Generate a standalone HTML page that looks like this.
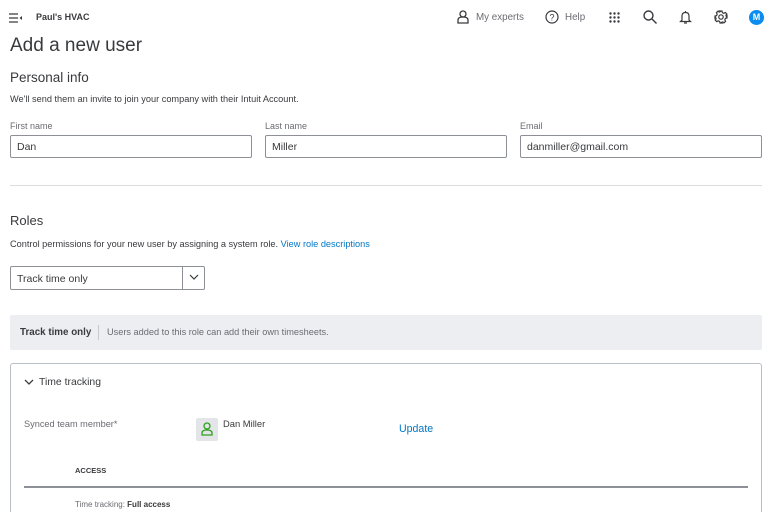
<!DOCTYPE html>
<html style="overflow:hidden;height:512px"><head><style>
*{margin:0;padding:0;box-sizing:border-box}
body{width:768px;height:512px;overflow:hidden;background:#fff;font-family:"Liberation Sans",sans-serif;color:#393a3d;position:relative}
.a{position:absolute;white-space:nowrap}
.inp{position:absolute;height:23px;border:1px solid #8d9096;border-radius:2px;font-size:10.5px;padding:5px 6px;color:#393a3d}
.lbl{font-size:9px;color:#6b6c72}
</style></head><body>
<svg class="a" style="left:9px;top:13px" width="14" height="10"><path d="M0 1h9M0 5h9M0 9h9" stroke="#393a3d" stroke-width="1.3"/><path d="M13 3v4l-2.5-2z" fill="#393a3d"/></svg>
<div class="a" style="left:36px;top:12px;font-size:9px;font-weight:bold">Paul's HVAC</div>
<div class="a" style="left:10px;top:35px;font-size:19px">Add a new user</div>
<div class="a" style="left:10px;top:70px;font-size:13.5px">Personal info</div>
<div class="a" style="left:10px;top:94px;font-size:9.2px">We'll send them an invite to join your company with their Intuit Account.</div>

<svg class="a" style="left:457px;top:10px" width="12" height="14" fill="none" stroke="#393a3d" stroke-width="1.3"><circle cx="6" cy="4" r="3"/><path d="M1 13v-3q0-3 5-3t5 3v3z"/></svg>
<div class="a" style="left:476px;top:12px;font-size:9.8px;color:#6b6c72">My experts</div>
<svg class="a" style="left:545px;top:10px" width="14" height="14" fill="none" stroke="#393a3d" stroke-width="1.2"><circle cx="7" cy="7" r="6"/><text x="7" y="10.5" font-size="9" text-anchor="middle" fill="#393a3d" stroke="none" font-family="Liberation Sans">?</text></svg>
<div class="a" style="left:565px;top:12px;font-size:9.8px;color:#6b6c72">Help</div>
<svg class="a" style="left:609px;top:12px" width="11" height="11" fill="#393a3d"><circle cx="1.5" cy="1.5" r="1.2"/><circle cx="5.5" cy="1.5" r="1.2"/><circle cx="9.5" cy="1.5" r="1.2"/><circle cx="1.5" cy="5.5" r="1.2"/><circle cx="5.5" cy="5.5" r="1.2"/><circle cx="9.5" cy="5.5" r="1.2"/><circle cx="1.5" cy="9.5" r="1.2"/><circle cx="5.5" cy="9.5" r="1.2"/><circle cx="9.5" cy="9.5" r="1.2"/></svg>
<svg class="a" style="left:643px;top:10px" width="14" height="14" fill="none" stroke="#393a3d" stroke-width="1.4"><circle cx="5.5" cy="5.5" r="4.5"/><path d="M9 9l4.5 4.5"/></svg>
<svg class="a" style="left:679px;top:10px" width="13" height="14" fill="none" stroke="#393a3d" stroke-width="1.2"><path d="M6.5 1v1M3 10V6q0-3.5 3.5-3.5T10 6v4l1.5 1.5h-10z M5 13h3"/></svg>
<svg class="a" style="left:714px;top:10px" width="14" height="14" fill="none" stroke="#393a3d" stroke-width="1.2"><circle cx="7" cy="7" r="2.2"/><path d="M6 1h2l.4 1.6 1.4.7 1.5-.8 1.4 1.4-.8 1.5.6 1.4L13 6v2l-1.6.4-.6 1.4.8 1.5-1.4 1.4-1.5-.8-1.4.6L8 13H6l-.4-1.6-1.4-.6-1.5.8-1.4-1.4.8-1.5-.6-1.4L1 8V6l1.6-.4.6-1.4-.8-1.5 1.4-1.4 1.5.8 1.4-.7z"/></svg>
<div class="a" style="left:749px;top:10px;width:15px;height:15px;border-radius:50%;background:#0a8cf0;color:#fff;font-size:9px;font-weight:bold;text-align:center;line-height:15px">M</div>

<div class="a lbl" style="left:10px;top:121px">First name</div>
<div class="a lbl" style="left:265px;top:121px">Last name</div>
<div class="a lbl" style="left:520px;top:121px">Email</div>
<div class="inp" style="left:10px;top:135px;width:242px">Dan</div>
<div class="inp" style="left:265px;top:135px;width:242px">Miller</div>
<div class="inp" style="left:520px;top:135px;width:242px">danmiller@gmail.com</div>
<div class="a" style="left:10px;top:185px;width:752px;height:1px;background:#dcdde0"></div>

<div class="a" style="left:10px;top:213px;font-size:13px">Roles</div>
<div class="a" style="left:10px;top:239px;font-size:9.2px">Control permissions for your new user by assigning a system role. <span style="color:#0077c5">View role descriptions</span></div>
<div class="inp" style="left:10px;top:266px;width:195px;height:24px;padding:6px;font-size:10.5px">Track time only</div>
<div class="a" style="left:182px;top:267px;width:1px;height:22px;background:#8d9096"></div>
<svg class="a" style="left:189px;top:274px" width="10" height="7" fill="none" stroke="#393a3d" stroke-width="1.2"><path d="M1 1l4 4 4-4"/></svg>

<div class="a" style="left:10px;top:315px;width:752px;height:35px;background:#eceef1;border-radius:2px"></div>
<div class="a" style="left:20px;top:327px;font-size:9.8px;font-weight:bold">Track time only</div>
<div class="a" style="left:98px;top:325px;width:1px;height:15px;background:#c8c9cc"></div>
<div class="a" style="left:107px;top:327px;font-size:9.2px;color:#6b6c72">Users added to this role can add their own timesheets.</div>

<div class="a" style="left:10px;top:363px;width:752px;height:152px;border:1px solid #babec5;border-bottom:none;border-radius:3px 3px 0 0"></div>
<svg class="a" style="left:24px;top:379px" width="10" height="7" fill="none" stroke="#393a3d" stroke-width="1.3"><path d="M1 1l4 4 4-4"/></svg>
<div class="a" style="left:39px;top:377px;font-size:10.4px">Time tracking</div>
<div class="a" style="left:24px;top:419px;font-size:9.2px;color:#6b6c72">Synced team member*</div>
<div class="a" style="left:196px;top:418px;width:22px;height:23px;background:#e3e5e8;border-radius:2px"></div>
<svg class="a" style="left:201px;top:422px" width="12" height="14" fill="none" stroke="#2ca01c" stroke-width="1.3"><circle cx="6" cy="4" r="3"/><path d="M1 13v-2q0-3 5-3t5 3v2z"/></svg>
<div class="a" style="left:223px;top:418px;font-size:9.4px">Dan Miller</div>
<div class="a" style="left:399px;top:423px;font-size:10.6px;color:#0077c5">Update</div>
<div class="a" style="left:75px;top:466px;font-size:7.5px;font-weight:bold">ACCESS</div>
<div class="a" style="left:24px;top:486px;width:724px;height:1.5px;background:#8d9096"></div>
<div class="a" style="left:75px;top:500px;font-size:8px;color:#6b6c72">Time tracking: <b style="color:#393a3d">Full access</b></div>
</body></html>
